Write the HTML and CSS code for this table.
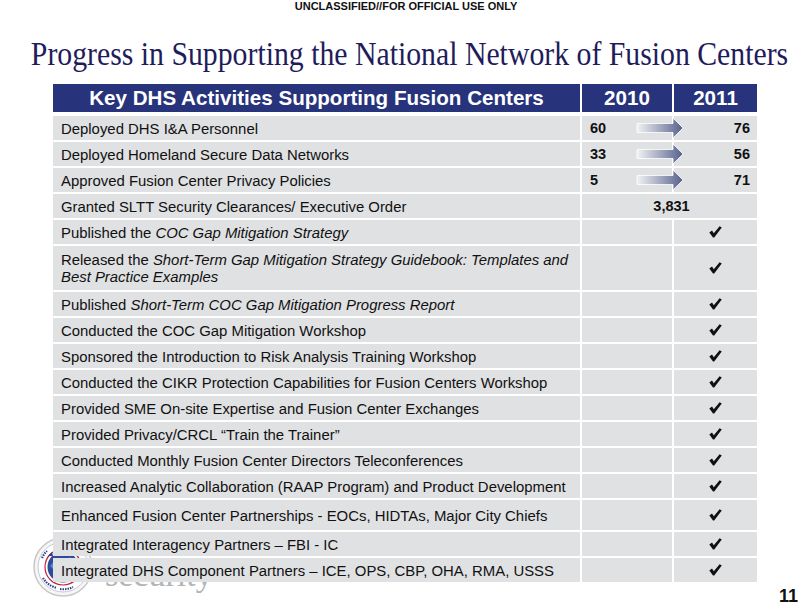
FILE: index.html
```html
<!DOCTYPE html>
<html lang="en">
<head>
<meta charset="utf-8">
<title>Progress in Supporting the National Network of Fusion Centers</title>
<link rel="stylesheet" href="styles.css">
</head>
<body>
<div class="slide">
  <div class="classification">UNCLASSIFIED//FOR OFFICIAL USE ONLY</div>
  <h1 class="title"><span class="title-text">Progress in Supporting the National Network of Fusion Centers</span></h1>

  <div class="logo">
    <svg class="seal" width="60" height="62" viewBox="0 0 60 62">
      <circle cx="30" cy="31" r="29" fill="#f6f6f6" stroke="#c8c8c8" stroke-width="1.5"/>
      <circle cx="30" cy="31" r="25" fill="#ffffff" stroke="#b8bdd0" stroke-width="0.8"/>
      <path d="M9 22 A22 22 0 0 1 14 15" stroke="#2d3f8a" stroke-width="2.2" fill="none" stroke-dasharray="1.5 1"/>
      <path d="M10 42 A22 22 0 0 0 24 52" stroke="#2d3f8a" stroke-width="2.2" fill="none" stroke-dasharray="1.5 1"/>
      <path d="M27 53 A22 22 0 0 0 40 51" stroke="#2d3f8a" stroke-width="2" fill="none" stroke-dasharray="1.5 1"/>
      <circle cx="30" cy="31" r="18" fill="#ffffff" stroke="#c0263a" stroke-width="1.2"/>
      <circle cx="30" cy="31" r="15.5" fill="#2e4a9a"/>
      <path d="M17 30 L24 22 L30 29 L37 21 L43 30 L35 38 L25 38 Z" fill="#6a83c0"/>
      <path d="M15 20 L19 16 L20 20 Z" fill="#2d3f8a"/>
    </svg>
    <span class="logo-word">security</span>
  </div>

  <div class="grid">
    <div class="hd">Key DHS Activities Supporting Fusion Centers</div>
    <div class="hd">2010</div>
    <div class="hd">2011</div>

    <div class="c txt"><span>Deployed DHS I&amp;A Personnel</span></div>
    <div class="c num from">60<svg class="arrow" width="48" height="22" viewBox="0 0 48 22"><defs><linearGradient id="ag1" x1="0" x2="1" y1="0" y2="0"><stop offset="0" stop-color="#f2f2f4"/><stop offset="1" stop-color="#56618c"/></linearGradient></defs><path d="M1 6.5 H37 V1 L47 11 L37 21 V15.5 H1 Z" fill="url(#ag1)" stroke="#ffffff" stroke-width="0.8"/></svg></div>
    <div class="c num to">76</div>

    <div class="c txt"><span>Deployed Homeland Secure Data Networks</span></div>
    <div class="c num from">33<svg class="arrow" width="48" height="22" viewBox="0 0 48 22"><path d="M1 6.5 H37 V1 L47 11 L37 21 V15.5 H1 Z" fill="url(#ag1)" stroke="#ffffff" stroke-width="0.8"/></svg></div>
    <div class="c num to">56</div>

    <div class="c txt"><span>Approved Fusion Center Privacy Policies</span></div>
    <div class="c num from">5<svg class="arrow" width="48" height="22" viewBox="0 0 48 22"><path d="M1 6.5 H37 V1 L47 11 L37 21 V15.5 H1 Z" fill="url(#ag1)" stroke="#ffffff" stroke-width="0.8"/></svg></div>
    <div class="c num to">71</div>

    <div class="c txt"><span>Granted SLTT Security Clearances/ Executive Order</span></div>
    <div class="c num span2">3,831</div>

    <div class="c txt"><span>Published the <i>COC Gap Mitigation Strategy</i></span></div>
    <div class="c"></div>
    <div class="c chk"><svg class="tick" width="13" height="12" viewBox="0 0 13 12"><path d="M0.3 6.6 L3 4.6 L4.8 7.2 L10.6 0.3 L12.8 1.4 L5.2 11.6 L4 11.6 Z" fill="#111"/></svg></div>

    <div class="c txt tall"><span>Released the <i>Short-Term Gap Mitigation Strategy Guidebook: Templates and Best Practice Examples</i></span></div>
    <div class="c tall"></div>
    <div class="c chk tall"><svg class="tick" width="13" height="12" viewBox="0 0 13 12"><path d="M0.3 6.6 L3 4.6 L4.8 7.2 L10.6 0.3 L12.8 1.4 L5.2 11.6 L4 11.6 Z" fill="#111"/></svg></div>

    <div class="c txt"><span>Published <i>Short-Term COC Gap Mitigation Progress Report</i></span></div>
    <div class="c"></div>
    <div class="c chk"><svg class="tick" width="13" height="12" viewBox="0 0 13 12"><path d="M0.3 6.6 L3 4.6 L4.8 7.2 L10.6 0.3 L12.8 1.4 L5.2 11.6 L4 11.6 Z" fill="#111"/></svg></div>

    <div class="c txt"><span>Conducted the COC Gap Mitigation Workshop</span></div>
    <div class="c"></div>
    <div class="c chk"><svg class="tick" width="13" height="12" viewBox="0 0 13 12"><path d="M0.3 6.6 L3 4.6 L4.8 7.2 L10.6 0.3 L12.8 1.4 L5.2 11.6 L4 11.6 Z" fill="#111"/></svg></div>

    <div class="c txt"><span>Sponsored the Introduction to Risk Analysis Training Workshop</span></div>
    <div class="c"></div>
    <div class="c chk"><svg class="tick" width="13" height="12" viewBox="0 0 13 12"><path d="M0.3 6.6 L3 4.6 L4.8 7.2 L10.6 0.3 L12.8 1.4 L5.2 11.6 L4 11.6 Z" fill="#111"/></svg></div>

    <div class="c txt"><span>Conducted the CIKR Protection Capabilities for Fusion Centers Workshop</span></div>
    <div class="c"></div>
    <div class="c chk"><svg class="tick" width="13" height="12" viewBox="0 0 13 12"><path d="M0.3 6.6 L3 4.6 L4.8 7.2 L10.6 0.3 L12.8 1.4 L5.2 11.6 L4 11.6 Z" fill="#111"/></svg></div>

    <div class="c txt"><span>Provided SME On-site Expertise and Fusion Center Exchanges</span></div>
    <div class="c"></div>
    <div class="c chk"><svg class="tick" width="13" height="12" viewBox="0 0 13 12"><path d="M0.3 6.6 L3 4.6 L4.8 7.2 L10.6 0.3 L12.8 1.4 L5.2 11.6 L4 11.6 Z" fill="#111"/></svg></div>

    <div class="c txt"><span>Provided Privacy/CRCL “Train the Trainer”</span></div>
    <div class="c"></div>
    <div class="c chk"><svg class="tick" width="13" height="12" viewBox="0 0 13 12"><path d="M0.3 6.6 L3 4.6 L4.8 7.2 L10.6 0.3 L12.8 1.4 L5.2 11.6 L4 11.6 Z" fill="#111"/></svg></div>

    <div class="c txt"><span>Conducted Monthly Fusion Center Directors Teleconferences</span></div>
    <div class="c"></div>
    <div class="c chk"><svg class="tick" width="13" height="12" viewBox="0 0 13 12"><path d="M0.3 6.6 L3 4.6 L4.8 7.2 L10.6 0.3 L12.8 1.4 L5.2 11.6 L4 11.6 Z" fill="#111"/></svg></div>

    <div class="c txt"><span>Increased Analytic Collaboration (RAAP Program) and Product Development</span></div>
    <div class="c"></div>
    <div class="c chk"><svg class="tick" width="13" height="12" viewBox="0 0 13 12"><path d="M0.3 6.6 L3 4.6 L4.8 7.2 L10.6 0.3 L12.8 1.4 L5.2 11.6 L4 11.6 Z" fill="#111"/></svg></div>

    <div class="c txt mid"><span>Enhanced Fusion Center Partnerships - EOCs, HIDTAs, Major City Chiefs</span></div>
    <div class="c mid"></div>
    <div class="c chk mid"><svg class="tick" width="13" height="12" viewBox="0 0 13 12"><path d="M0.3 6.6 L3 4.6 L4.8 7.2 L10.6 0.3 L12.8 1.4 L5.2 11.6 L4 11.6 Z" fill="#111"/></svg></div>

    <div class="c txt"><span>Integrated Interagency Partners – FBI - IC</span></div>
    <div class="c"></div>
    <div class="c chk"><svg class="tick" width="13" height="12" viewBox="0 0 13 12"><path d="M0.3 6.6 L3 4.6 L4.8 7.2 L10.6 0.3 L12.8 1.4 L5.2 11.6 L4 11.6 Z" fill="#111"/></svg></div>

    <div class="c txt"><span>Integrated DHS Component Partners – ICE, OPS, CBP, OHA, RMA, USSS</span></div>
    <div class="c"></div>
    <div class="c chk"><svg class="tick" width="13" height="12" viewBox="0 0 13 12"><path d="M0.3 6.6 L3 4.6 L4.8 7.2 L10.6 0.3 L12.8 1.4 L5.2 11.6 L4 11.6 Z" fill="#111"/></svg></div>
  </div>

  <div class="page-num">11</div>
</div>
</body>
</html>
```

FILE: styles.css
```css
* { box-sizing: border-box; }

html, body {
  margin: 0;
  padding: 0;
  background: #ffffff;
}

body {
  font-family: "Liberation Sans", Arial, sans-serif;
  color: #111111;
}

.slide {
  position: relative;
  width: 812px;
  height: 607px;
  overflow: hidden;
}

.classification {
  text-align: center;
  font-weight: bold;
  font-size: 11px;
  line-height: 13px;
  color: #111;
}

.title {
  margin: 21px 0 0 0;
  padding-left: 7px;
  display: flex;
  justify-content: center;
  font-family: "Liberation Serif", "Times New Roman", serif;
  font-weight: normal;
  font-size: 34px;
  line-height: 40px;
  color: #1f1c5c;
  white-space: nowrap;
}

.title-text {
  display: inline-block;
  flex: none;
  transform: scaleX(0.8755);
  transform-origin: center;
}

.logo {
  position: absolute;
  left: 33px;
  top: 536px;
  display: flex;
  align-items: flex-end;
  gap: 12px;
}

.seal { display: block; }

.logo-word {
  font-family: "Liberation Serif", serif;
  font-size: 34px;
  line-height: 34px;
  color: #b4b4b4;
  margin-bottom: 6px;
}

.grid {
  position: relative;
  z-index: 1;
  margin: 10px 0 0 53px;
  display: grid;
  grid-template-columns: 527px 90px 83px;
  gap: 2px;
  width: 704px;
}

.hd {
  background: #27337a;
  color: #ffffff;
  font-weight: bold;
  font-size: 20.6px;
  height: 28px;
  display: flex;
  align-items: center;
  justify-content: center;
  margin-bottom: 2px;
}

.c {
  background: #e0e1e3;
  height: 24px;
  display: flex;
  align-items: center;
  font-size: 14.9px;
}

.c.tall { height: 44px; }
.c.mid { height: 30px; }

.txt {
  padding: 2px 6px 0 8px;
  line-height: 17px;
}

.num {
  font-weight: bold;
  font-size: 14.5px;
}

.from {
  position: relative;
  padding-left: 8px;
}

.to {
  justify-content: flex-end;
  padding-right: 7px;
}

.span2 {
  grid-column: span 2;
  justify-content: center;
  padding-left: 4px;
}

.arrow {
  position: absolute;
  left: 54px;
  top: 1px;
  z-index: 2;
}

.chk {
  justify-content: center;
}

.tick { display: block; }

.page-num {
  position: absolute;
  right: 14px;
  bottom: 1px;
  font-weight: bold;
  font-size: 18px;
  line-height: 20px;
}
```
